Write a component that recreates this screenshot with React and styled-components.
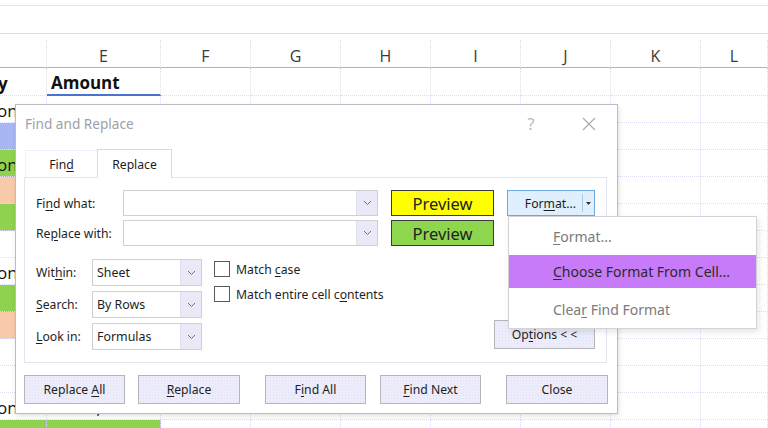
import React from "react";
import styled, { createGlobalStyle } from "styled-components";

const Global = createGlobalStyle`
  * { box-sizing: border-box; }
  html, body { margin: 0; padding: 0; background: #fff; }
  body { font-family: "Noto Sans", "Open Sans", sans-serif; }
`;

const Page = styled.div`
  position: relative;
  width: 768px;
  height: 428px;
  overflow: hidden;
  background: #fff;
`;

/* ---------- Spreadsheet ---------- */
const FormulaBar = styled.div`
  margin-top: 5px;
  height: 29px;
  border-top: 1px solid #e2e0f4;
  border-bottom: 1px solid #dcdaf2;
  margin-bottom: 6px;
`;

const Grid = styled.div`
  display: grid;
  grid-template-columns: 47px 114px repeat(6, 90px) 67px;
  grid-template-rows: 28px 28px;
  grid-auto-rows: 27px;
`;

const HeadCell = styled.div`
  display: flex;
  align-items: center;
  justify-content: center;
  font-family: "Open Sans", "Noto Sans", sans-serif;
  font-size: 16px;
  color: #3a3a3a;
  border-bottom: 1px solid #b4b4b4;
  border-right: 1px dotted #dcdaf4;
  padding-top: 4px;
`;

const Cell = styled.div`
  background: ${(p) => p.$fill || "#fff"};
  border-right: 1px dotted #dcdaf4;
  border-bottom: ${(p) => (p.$accent ? "2px solid #4a72cf" : "1px dotted #dcdaf4")};
  font-family: "Open Sans", "Noto Sans", sans-serif;
  font-size: 17px;
  line-height: 22px;
  font-weight: ${(p) => (p.$bold ? 700 : 400)};
  color: #111;
  display: flex;
  align-items: flex-end;
  justify-content: ${(p) => (p.$right ? "flex-end" : "flex-start")};
  padding: ${(p) => (p.$right ? "0 6px 0 0" : "0 0 0 4px")};
  overflow: hidden;
  white-space: nowrap;
`;

const Clip = styled.span`
  margin-left: ${(p) => p.$shift || 0}px;
`;

const BLUE = "#a9b6f4";
const GREEN = "#8fd24f";
const PEACH = "#f8caaa";

const cols = ["D", "E", "F", "G", "H", "I", "J", "K", "L"];
const rows = [
  { fill: "", d: "on" },
  { fill: BLUE },
  { fill: GREEN, d: "on" },
  { fill: PEACH },
  { fill: GREEN },
  { fill: "" },
  { fill: "", d: "on" },
  { fill: GREEN },
  { fill: PEACH },
  { fill: "" },
  { fill: "" },
  { fill: "", d: "on", e: "5,545.22" },
  { fill: GREEN },
];

function Sheet() {
  return (
    <>
      <FormulaBar />
      <Grid>
        {cols.map((c) => (
          <HeadCell key={c}>{c === "D" ? "" : c}</HeadCell>
        ))}
        <Cell $bold>
          <Clip $shift={-6}>y</Clip>
        </Cell>
        <Cell $bold $accent>
          Amount
        </Cell>
        {cols.slice(2).map((c) => (
          <Cell key={"r1" + c} />
        ))}
        {rows.map((r, i) => (
          <React.Fragment key={i}>
            <Cell $fill={r.fill || undefined}>
              {r.d && <Clip $shift={-7}>{r.d}</Clip>}
            </Cell>
            <Cell $fill={r.fill || undefined} $right>
              {r.e}
            </Cell>
            {cols.slice(2).map((c) => (
              <Cell key={c} />
            ))}
          </React.Fragment>
        ))}
      </Grid>
    </>
  );
}

/* ---------- Dialog ---------- */
const Dialog = styled.div`
  position: absolute;
  left: 15px;
  top: 104px;
  width: 603px;
  height: 310px;
  background: #fff;
  border: 1px solid #bdbdbd;
  box-shadow: 1px 2px 5px rgba(0, 0, 0, 0.12);
  display: flex;
  flex-direction: column;
  padding: 0 0 0 8px;
  font-family: "Noto Sans", "Open Sans", sans-serif;
  font-size: 12.2px;
  color: #1e1e1e;
`;

const TitleBar = styled.div`
  height: 44px;
  display: flex;
  align-items: flex-start;
  padding: 9px 21px 0 1px;
`;

const Title = styled.div`
  flex: 1;
  font-size: 13.6px;
  color: #a0a0a8;
  line-height: 20px;
`;

const HelpGlyph = styled.div`
  width: 14px;
  text-align: center;
  font-size: 16px;
  line-height: 20px;
  color: #b8b8c4;
  margin-right: 44px;
`;

const CloseGlyph = styled.svg`
  width: 14px;
  height: 14px;
  margin-top: 3px;
`;

const Tabs = styled.div`
  display: flex;
  height: 28px;
  padding-left: 1px;
  position: relative;
  z-index: 1;
`;

const Tab = styled.div`
  width: ${(p) => p.$w}px;
  height: ${(p) => (p.$active ? 29 : 27)}px;
  margin-top: ${(p) => (p.$active ? 0 : 1)}px;
  display: flex;
  align-items: center;
  justify-content: center;
  font-size: 12.2px;
  background: #fff;
  border: ${(p) => (p.$active ? "1px solid #d8d8e0" : "1px dotted #e4e4f2")};
  border-bottom: none;
  border-right: ${(p) => (p.$active ? "1px solid #d8d8e0" : "none")};
  color: #1c1c1c;
`;

const Panel = styled.div`
  width: 583px;
  height: 186px;
  border: 1px solid #e4e4f0;
  padding: 12px 11px 0 11px;
  display: flex;
  flex-direction: column;
`;

const FieldRow = styled.div`
  display: flex;
  align-items: center;
  height: 26px;
  margin-bottom: ${(p) => p.$mb || 0}px;
`;

const Label = styled.div`
  width: ${(p) => p.$w}px;
  flex-shrink: 0;
  white-space: nowrap;
`;

const Combo = styled.div`
  width: ${(p) => p.$w}px;
  height: ${(p) => p.$h || 26}px;
  border: 1px solid #cfcfd6;
  display: flex;
  background: #fff;
  flex-shrink: 0;
`;

const ComboText = styled.div`
  flex: 1;
  padding-left: 4px;
  display: flex;
  align-items: center;
  font-size: 12.4px;
  white-space: nowrap;
`;

const ComboArrow = styled.div`
  width: 21px;
  background: #e9e9f8;
  border-left: 1px solid #dedeea;
  display: flex;
  align-items: center;
  justify-content: center;
`;

const Chevron = () => (
  <svg width="9" height="6" viewBox="0 0 9 6">
    <path d="M1 1 L4.5 4.5 L8 1" fill="none" stroke="#6d6d78" strokeWidth="1" />
  </svg>
);

const PreviewBox = styled.div`
  width: 103px;
  height: 26px;
  margin-left: 13px;
  background: ${(p) => p.$bg};
  border: 1px solid #3a3a3a;
  display: flex;
  align-items: center;
  justify-content: center;
  font-size: 16.5px;
  color: #222;
  flex-shrink: 0;
`;

const SplitButton = styled.div`
  width: 88px;
  height: 26px;
  margin-left: 13px;
  display: flex;
  background: #dff0fc;
  border: 1px solid #6ea9e3;
  flex-shrink: 0;
`;

const SplitMain = styled.div`
  flex: 1;
  display: flex;
  align-items: center;
  justify-content: flex-end;
  padding-right: 6px;
  border-right: 1px solid #a9c9e8;
  margin: 3px 0;
`;

const SplitArrow = styled.div`
  width: 11px;
  display: flex;
  align-items: center;
  justify-content: center;
`;

const OptionsArea = styled.div`
  display: flex;
  margin-top: 13px;
`;

const SelectGrid = styled.div`
  display: grid;
  grid-template-columns: 56px 110px;
  grid-auto-rows: 27px;
  row-gap: 5px;
  align-items: center;
`;

const Checks = styled.div`
  margin-left: 12px;
  display: flex;
  flex-direction: column;
  padding-top: 2px;
`;

const CheckRow = styled.div`
  display: flex;
  align-items: center;
  height: 16px;
  margin-bottom: 9px;
`;

const Box = styled.div`
  width: 16px;
  height: 16px;
  border: 1px solid #5a5a5a;
  background: #fff;
  margin-right: 6px;
  flex-shrink: 0;
`;

const Spacer = styled.div`
  flex: 1;
`;

const Button = styled.div`
  width: ${(p) => p.$w || 101}px;
  height: 29px;
  margin-left: ${(p) => p.$ml || 0}px;
  background-color: #ececfa;
  background-image: radial-gradient(circle, #e0e0f6 0.7px, transparent 0.9px);
  background-size: 3px 3px;
  border: 1px solid #b4b4bc;
  display: flex;
  align-items: center;
  justify-content: center;
  color: #1e1e1e;
  flex-shrink: 0;
  white-space: nowrap;
`;

const OptionsBtn = styled(Button)`
  align-self: flex-end;
  margin-bottom: 1px;
`;

const ButtonRow = styled.div`
  display: flex;
  margin-top: 12px;
`;

const Menu = styled.div`
  position: absolute;
  left: 492px;
  top: 111px;
  width: 249px;
  height: 113px;
  background: #fff;
  border: 1px solid #d2d2d8;
  box-shadow: 2px 3px 6px rgba(0, 0, 0, 0.1);
  padding: 3px 0 0 0;
  z-index: 5;
  font-size: 14px;
`;

const MenuItem = styled.div`
  height: 33px;
  margin-top: ${(p) => p.$mt || 0}px;
  display: flex;
  align-items: center;
  padding-left: 44px;
  background: ${(p) => (p.$hot ? "#c87bf8" : "transparent")};
  color: ${(p) => (p.$hot ? "#2a2a2a" : "#7a7a7a")};
  white-space: nowrap;
`;

const Txt = styled.span`
  white-space: pre;
`;

const U = styled.span`
  text-decoration: underline;
  text-underline-offset: 2px;
`;

function Select({ value }) {
  return (
    <Combo $w={110} $h={27}>
      <ComboText>{value}</ComboText>
      <ComboArrow>
        <Chevron />
      </ComboArrow>
    </Combo>
  );
}

function FindReplaceDialog() {
  return (
    <Dialog>
      <TitleBar>
        <Title>Find and Replace</Title>
        <HelpGlyph>?</HelpGlyph>
        <CloseGlyph viewBox="0 0 14 14">
          <path d="M1 1 L13 13 M13 1 L1 13" stroke="#a8a8b2" strokeWidth="1.1" />
        </CloseGlyph>
      </TitleBar>
      <Tabs>
        <Tab $w={72}>
          <Txt>
            Fin<U>d</U>
          </Txt>
        </Tab>
        <Tab $w={75} $active>
          Replace
        </Tab>
      </Tabs>
      <Panel>
        <FieldRow $mb={4}>
          <Label $w={87}>
            Fi<U>n</U>d what:
          </Label>
          <Combo $w={255}>
            <ComboText />
            <ComboArrow>
              <Chevron />
            </ComboArrow>
          </Combo>
          <PreviewBox $bg="#ffff00">Preview</PreviewBox>
          <SplitButton>
            <SplitMain>
              <Txt>
                For<U>m</U>at...
              </Txt>
            </SplitMain>
            <SplitArrow>
              <svg width="5" height="3" viewBox="0 0 5 3">
                <path d="M0 0 H5 L2.5 3 Z" fill="#333" />
              </svg>
            </SplitArrow>
          </SplitButton>
        </FieldRow>
        <FieldRow>
          <Label $w={87}>
            Re<U>p</U>lace with:
          </Label>
          <Combo $w={255}>
            <ComboText />
            <ComboArrow>
              <Chevron />
            </ComboArrow>
          </Combo>
          <PreviewBox $bg="#8fd64f">Preview</PreviewBox>
        </FieldRow>
        <OptionsArea>
          <SelectGrid>
            <Label $w={56}>
              Wit<U>h</U>in:
            </Label>
            <Select value="Sheet" />
            <Label $w={56}>
              <U>S</U>earch:
            </Label>
            <Select value="By Rows" />
            <Label $w={56}>
              <U>L</U>ook in:
            </Label>
            <Select value="Formulas" />
          </SelectGrid>
          <Checks>
            <CheckRow>
              <Box />
              <Txt>
                Match <U>c</U>ase
              </Txt>
            </CheckRow>
            <CheckRow>
              <Box />
              <Txt>
                Match entire cell c<U>o</U>ntents
              </Txt>
            </CheckRow>
          </Checks>
          <Spacer />
          <OptionsBtn>
            <Txt>
              Op<U>t</U>ions &lt; &lt;
            </Txt>
          </OptionsBtn>
        </OptionsArea>
      </Panel>
      <ButtonRow>
        <Button>
          <Txt>
            Replace <U>A</U>ll
          </Txt>
        </Button>
        <Button $ml={13} $w={102}>
          <Txt>
            <U>R</U>eplace
          </Txt>
        </Button>
        <Button $ml={25}>
          <Txt>
            F<U>i</U>nd All
          </Txt>
        </Button>
        <Button $ml={14}>
          <Txt>
            <U>F</U>ind Next
          </Txt>
        </Button>
        <Button $ml={25} $w={102}>
          <Txt>Close</Txt>
        </Button>
      </ButtonRow>
      <Menu>
        <MenuItem>
          <Txt>
            <U>F</U>ormat...
          </Txt>
        </MenuItem>
        <MenuItem $hot $mt={2}>
          <Txt>
            <U>C</U>hoose Format From Cell...
          </Txt>
        </MenuItem>
        <MenuItem $mt={5}>
          <Txt>
            Clea<U>r</U> Find Format
          </Txt>
        </MenuItem>
      </Menu>
    </Dialog>
  );
}

export default function App() {
  return (
    <Page>
      <Global />
      <Sheet />
      <FindReplaceDialog />
    </Page>
  );
}
